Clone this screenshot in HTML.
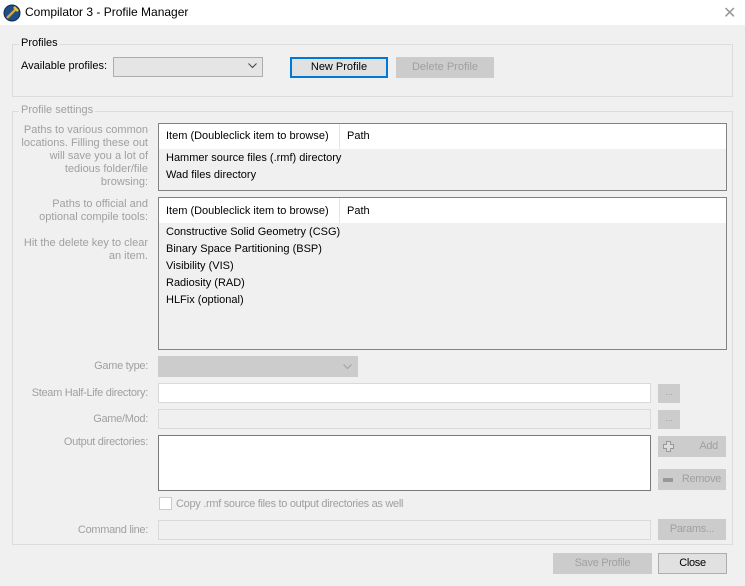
<!DOCTYPE html>
<html><head><meta charset="utf-8"><style>
*{box-sizing:border-box;margin:0;padding:0}
body{width:745px;height:586px;background:#f0f0f0;font-family:"Liberation Sans",sans-serif;font-size:11px;color:#000;position:relative;overflow:hidden}
.a{position:absolute}
.title{left:0;top:0;width:745px;height:25px;background:#fff}
.grp{border:1px solid #dcdcdc}
.gl{background:#f0f0f0;padding:0 2px;font-size:11px}
.lbl{color:#a0a0a0;text-align:right;line-height:13px}
.n{font-family:"Liberation Sans",sans-serif;font-size:11px;letter-spacing:-0.3px;color:#a0a0a0;text-align:right}
.btn{border:1px solid #adadad;background:#e1e1e1;text-align:center;line-height:18px}
.dis{border:1px solid #cccccc;background:#cccccc;color:#a0a0a0}
.lv{border:1px solid #828282;background:#f0f0f0}
.hd{position:absolute;left:0;top:0;right:0;background:#fff}
.it{position:absolute;left:7px}
</style></head><body>
<div class="a title"></div>
<svg class="a" style="left:3px;top:4px" width="18" height="18" viewBox="0 0 18 18"><circle cx="9" cy="9" r="8" fill="#1c4f8a"/><circle cx="9" cy="9" r="8" fill="none" stroke="#0d2a4f"/><path d="M4 14 L13 5" stroke="#e8a020" stroke-width="2.5"/><path d="M11 3 L15 7" stroke="#f0c040" stroke-width="2.5"/></svg>
<div class="a" style="left:25px;top:5px;font-size:12px">Compilator 3 - Profile Manager</div>
<div class="a" style="left:723px;top:3px;font-size:16px;color:#999">✕</div>

<div class="a grp" style="left:12px;top:44px;width:721px;height:53px"></div>
<div class="a gl" style="left:19px;top:37px">Profiles</div>
<div class="a" style="left:21px;top:60px">Available profiles:</div>
<div class="a" style="left:113px;top:57px;width:150px;height:20px;border:1px solid #adadad;background:#e5e5e5"></div>
<svg class="a" style="left:248px;top:63px" width="9" height="6"><path d="M0.5 0.5 L4.5 4.5 L8.5 0.5" fill="none" stroke="#444"/></svg>
<div class="a btn" style="left:290px;top:57px;width:98px;height:21px;border:2px solid #0078d7;line-height:17px">New Profile</div>
<div class="a btn dis" style="left:396px;top:57px;width:98px;height:21px">Delete Profile</div>

<div class="a grp" style="left:12px;top:111px;width:721px;height:434px"></div>
<div class="a gl" style="left:19px;top:104px;color:#a0a0a0">Profile settings</div>

<div class="a lbl" style="left:20px;top:124px;width:128px">Paths to various common locations. Filling these out will save you a lot of tedious folder/file browsing:</div>
<div class="a lv" style="left:158px;top:123px;width:569px;height:68px">
 <div class="hd" style="height:25px"><div class="it" style="top:6px">Item (Doubleclick item to browse)</div><div class="a" style="left:180px;top:0;width:1px;height:25px;background:#e5e5e5"></div><div class="a" style="left:188px;top:6px">Path</div></div>
 <div class="it" style="top:28px">Hammer source files (.rmf) directory</div>
 <div class="it" style="top:45px">Wad files directory</div>
</div>

<div class="a lbl" style="left:20px;top:198px;width:128px">Paths to official and optional compile tools:<br><br>Hit the delete key to clear an item.</div>
<div class="a lv" style="left:158px;top:197px;width:569px;height:153px">
 <div class="hd" style="height:25px"><div class="it" style="top:7px">Item (Doubleclick item to browse)</div><div class="a" style="left:180px;top:0;width:1px;height:25px;background:#e5e5e5"></div><div class="a" style="left:188px;top:7px">Path</div></div>
 <div class="it" style="top:28px">Constructive Solid Geometry (CSG)</div>
 <div class="it" style="top:45px">Binary Space Partitioning (BSP)</div>
 <div class="it" style="top:62px">Visibility (VIS)</div>
 <div class="it" style="top:79px">Radiosity (RAD)</div>
 <div class="it" style="top:96px">HLFix (optional)</div>
</div>

<div class="a n" style="left:0;top:360px;width:148px">Game type:</div>
<div class="a" style="left:158px;top:356px;width:200px;height:21px;background:#cccccc"></div>
<svg class="a" style="left:343px;top:364px" width="9" height="6"><path d="M0.5 0.5 L4.5 4.5 L8.5 0.5" fill="none" stroke="#a0a0a0"/></svg>

<div class="a n" style="left:0;top:387px;width:148px">Steam Half-Life directory:</div>
<div class="a" style="left:158px;top:383px;width:493px;height:20px;background:#fff;border:1px solid #d9d9d9"></div>
<div class="a btn dis" style="left:658px;top:384px;width:22px;height:19px;line-height:14px;font-size:9px">...</div>

<div class="a n" style="left:0;top:413px;width:148px">Game/Mod:</div>
<div class="a" style="left:158px;top:409px;width:493px;height:20px;background:#f0f0f0;border:1px solid #d9d9d9"></div>
<div class="a btn dis" style="left:658px;top:410px;width:22px;height:19px;line-height:14px;font-size:9px">...</div>

<div class="a n" style="left:0;top:436px;width:148px">Output directories:</div>
<div class="a" style="left:158px;top:435px;width:493px;height:56px;background:#fff;border:1px solid #7a7a7a"></div>
<div class="a btn dis n" style="left:658px;top:436px;width:68px;height:21px;text-align:right;padding-right:7px;line-height:19px">Add</div>
<svg class="a" style="left:663px;top:441px" width="11" height="11"><path d="M3.5 0.5h4v3h3v4h-3v3h-4v-3h-3v-4h3z" fill="#ddd" stroke="#999"/></svg>
<div class="a btn dis n" style="left:658px;top:469px;width:68px;height:21px;text-align:right;padding-right:4px;line-height:19px">Remove</div>
<div class="a" style="left:663px;top:478px;width:10px;height:4px;background:#999"></div>

<div class="a" style="left:159px;top:497px;width:13px;height:13px;background:#fff;border:1px solid #ccc"></div>
<div class="a n" style="left:176px;top:498px;text-align:left">Copy .rmf source files to output directories as well</div>

<div class="a n" style="left:0;top:524px;width:148px">Command line:</div>
<div class="a" style="left:158px;top:520px;width:493px;height:20px;background:#f0f0f0;border:1px solid #d9d9d9"></div>
<div class="a btn dis n" style="left:658px;top:519px;width:68px;height:21px;text-align:center;line-height:19px">Params...</div>

<div class="a btn dis n" style="left:553px;top:553px;width:99px;height:21px;text-align:center;line-height:19px">Save Profile</div>
<div class="a btn n" style="left:658px;top:553px;width:69px;height:21px;text-align:center;line-height:19px;color:#000">Close</div>
</body></html>
